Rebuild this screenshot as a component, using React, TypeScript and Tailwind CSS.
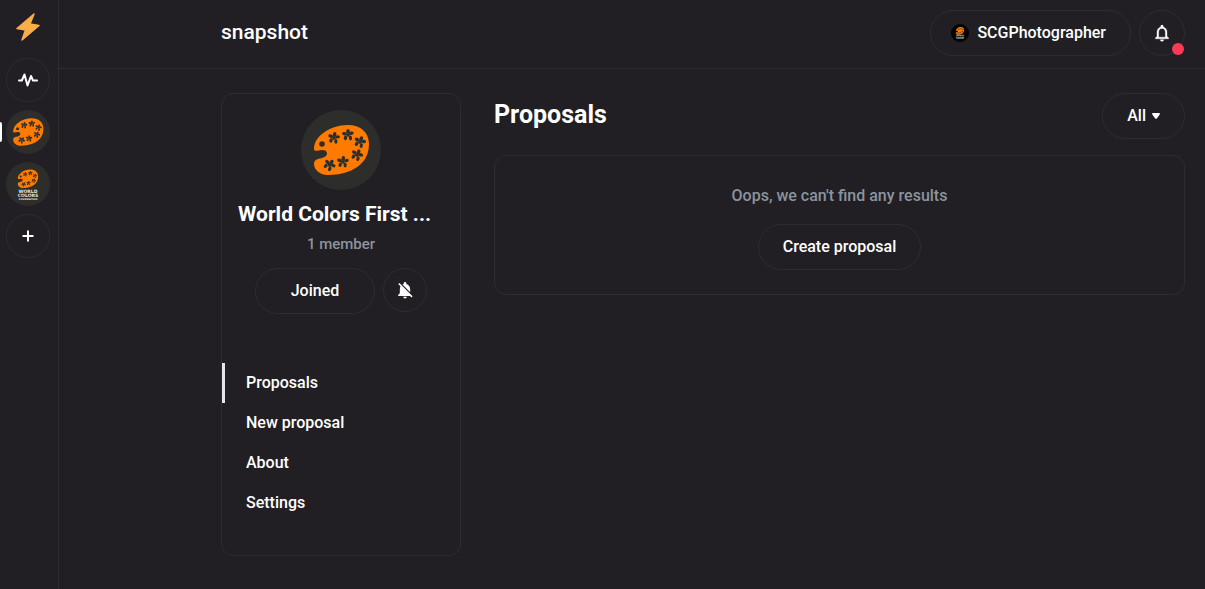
type IconProps = {
  className?: string;
};

const navItems = ["Proposals", "New proposal", "About", "Settings"];

const flowers = [
  { x: 33, y: 28, angle: 10 },
  { x: 47, y: 25, angle: 0 },
  { x: 59, y: 32, angle: 20 },
  { x: 56, y: 45, angle: 25 },
  { x: 42, y: 52, angle: 5 },
  { x: 28.5, y: 55, angle: 35 },
];

function Palette() {
  return (
    <>
      <path
        fill="#ff7a00"
        d="M13 39C13 33 16 28 21 24C28 18 38 15 47 15C59 15 68 22 68 34C68 48 60 56 49 61C41 64 33 65 27 65C19 65 13 60 13 54C13 50 16 49 19 48.500C23 48 26 46 26 43.500C26 41 24 40 21 40C17 40.500 13 42 13 39Z"
      />
      <g fill="#2d2e2c">
        <circle cx="21" cy="34" r="2.800" />
        {flowers.map((f) => (
          <g key={f.x} transform={`translate(${f.x} ${f.y}) rotate(${f.angle})`}>
            <circle r="1.800" />
            <ellipse cx="0" cy="-3.600" rx="1.800" ry="2.500" />
            <ellipse cx="3.600" cy="-1" rx="2.400" ry="1.700" transform="rotate(-12)" />
            <ellipse cx="2" cy="3.300" rx="1.600" ry="2.400" transform="rotate(-8)" />
            <ellipse cx="-2" cy="3.300" rx="1.700" ry="2.300" transform="rotate(10)" />
            <ellipse cx="-3.700" cy="-.8" rx="2.500" ry="1.700" transform="rotate(8)" />
          </g>
        ))}
      </g>
    </>
  );
}

function PaletteAvatar({ className }: IconProps) {
  return (
    <svg viewBox="0 0 80 80" className={className} aria-hidden="true">
      <circle cx="40" cy="40" r="40" fill="#2d2e2c" />
      <Palette />
    </svg>
  );
}

function WorldColorsAvatar({ className, background }: IconProps & { background: string }) {
  return (
    <svg viewBox="0 0 44 44" className={className} aria-hidden="true">
      <circle cx="22" cy="22" r="22" fill={background} />
      <g transform="translate(7 2) scale(.37)">
        <Palette />
      </g>
      <g fill="#e4e4e4" textAnchor="middle" fontFamily="DejaVu Sans, sans-serif" fontWeight="700">
        <text x="22" y="30.500" fontSize="4.500">WORLD</text>
        <text x="22" y="35" fontSize="4.500">COLORS</text>
        <text x="22" y="37.500" fontSize="2.500">FOUNDATION</text>
      </g>
    </svg>
  );
}

function Bell({ className }: IconProps) {
  return (
    <svg viewBox="0 0 24 24" fill="currentColor" stroke="currentColor" strokeWidth=".4" className={className} aria-hidden="true">
      <path d="M12 22c1.100 0 2-.9 2-2h-4c0 1.100.9 2 2 2zm6-6v-5c0-3.070-1.630-5.640-4.500-6.320V4c0-.83-.67-1.500-1.500-1.500s-1.500.67-1.500 1.500v.68C7.640 5.360 6 7.920 6 11v5l-2 2v1h16v-1l-2-2zm-2 1H8v-6c0-2.480 1.510-4.500 4-4.500s4 2.020 4 4.500v6z" />
    </svg>
  );
}

function BellOff({ className }: IconProps) {
  return (
    <svg viewBox="0 0 24 24" fill="currentColor" className={className} aria-hidden="true">
      <path d="M7 6.800C6.200 8 5.800 9.400 5.800 11V16L3.800 18V19.200H19Z" />
      <path d="M9 5.400Q9.700 4.900 10.400 4.700V4C10.400 3.100 11.100 2.400 12 2.400S13.600 3.100 13.600 4V4.700C16.500 5.400 18.200 8 18.200 11V14.800Z" />
      <path d="M9.900 20H14.100C14.100 21.200 13.100 22.100 12 22.100S9.900 21.200 9.900 20Z" />
      <path fill="none" stroke="currentColor" strokeWidth="1.900" d="M4.600 4.200L20.400 20.300" />
    </svg>
  );
}

function Sidebar() {
  return (
    <aside className="flex w-[59px] shrink-0 flex-col items-center gap-2 border-r border-[#2d2c31] pr-[2px]">
      <a href="#" aria-label="Home" className="flex h-[50px] items-center pt-1">
        <svg viewBox="0 0 24 28" className="h-7 w-6" aria-hidden="true">
          <path
            fill="#f9ae4a"
            stroke="#f9ae4a"
            strokeWidth="1.500"
            strokeLinejoin="round"
            d="M18 1L1 15.500L9.500 17L6 27L23 12.500L14 11Z"
          />
        </svg>
      </a>
      <button
        aria-label="Timeline"
        className="flex size-11 items-center justify-center rounded-full border border-[#2d2c31]"
      >
        <svg
          viewBox="0 0 20 16"
          className="h-4 w-5"
          fill="none"
          stroke="white"
          strokeWidth="2"
          strokeLinecap="round"
          strokeLinejoin="round"
          aria-hidden="true"
        >
          <path d="M1 8.500H3.800L6.500 2.500L9.500 13.500L13 4L15 8.500H19" />
        </svg>
      </button>
      <div className="relative flex w-full justify-center">
        <span className="absolute top-3 left-0 h-5 w-[2px] rounded-r bg-white" />
        <a href="#" aria-label="World Colors First">
          <PaletteAvatar className="size-11" />
        </a>
      </div>
      <a href="#" aria-label="World Colors">
        <WorldColorsAvatar className="size-11" background="#2d2e2c" />
      </a>
      <button
        aria-label="Create space"
        className="flex size-11 items-center justify-center rounded-full border border-[#2d2c31]"
      >
        <svg viewBox="0 0 12 12" className="size-3" stroke="white" strokeWidth="2" aria-hidden="true">
          <path d="M6 .5V11.500M.5 6H11.500" />
        </svg>
      </button>
    </aside>
  );
}

function Header() {
  return (
    <header className="flex h-[69px] items-center justify-between border-b border-[#2d2c31] pr-5 pb-[2px] pl-[162px]">
      <a href="#" className="text-[21px] font-medium">
        snapshot
      </a>
      <div className="flex gap-2">
        <button className="flex h-[46px] items-center gap-2 rounded-full border border-[#2d2c31] pr-6 pl-5">
          <WorldColorsAvatar className="size-[18px]" background="#000000" />
          <span>SCGPhotographer</span>
        </button>
        <button
          aria-label="Notifications"
          className="relative flex size-[46px] items-center justify-center rounded-full border border-[#2d2c31]"
        >
          <Bell className="size-5" />
          <span className="absolute right-0 bottom-0 size-3 rounded-full bg-[#ff3856]" />
        </button>
      </div>
    </header>
  );
}

function SpaceCard() {
  return (
    <section className="w-60 shrink-0 rounded-xl border border-[#2d2c31] pb-8">
      <div className="flex flex-col items-center px-4 pt-4">
        <PaletteAvatar className="size-20" />
        <h3 className="mt-2 w-full text-[21px] leading-8 font-bold whitespace-nowrap">
          World Colors First ...
        </h3>
        <p className="mt-[2px] text-[15px] leading-6 text-[#8b949e]">1 member</p>
        <div className="mt-3 flex gap-2">
          <button className="h-[46px] w-[120px] rounded-full border border-[#2d2c31]">Joined</button>
          <button
            aria-label="Mute notifications"
            className="flex size-11 items-center justify-center rounded-full border border-[#2d2c31]"
          >
            <BellOff className="size-5" />
          </button>
        </div>
      </div>
      <nav className="mt-[49px] flex flex-col">
        {navItems.map((item, index) => (
          <a
            key={item}
            href="#"
            className={
              index === 0
                ? "flex h-10 items-center border-l-[3px] border-[#e6e6ea] pl-[21px]"
                : "flex h-10 items-center pl-6"
            }
          >
            {item}
          </a>
        ))}
      </nav>
    </section>
  );
}

export default function App() {
  return (
    <div className="flex min-h-screen bg-[#211f24] font-['Roboto',sans-serif] text-base font-medium text-white">
      <Sidebar />
      <div className="min-w-0 flex-1">
        <Header />
        <div className="flex items-start gap-[33px] pt-6 pr-5 pl-[162px]">
          <SpaceCard />
          <main className="min-w-0 flex-1">
            <div className="flex items-start justify-between">
              <h2 className="text-[25px] leading-[44px] font-bold">Proposals</h2>
              <button className="flex h-[46px] items-center gap-[6px] rounded-full border border-[#2d2c31] px-6">
                All
                <svg viewBox="0 0 8 6" className="h-[6px] w-2" fill="white" aria-hidden="true">
                  <path d="M1 0H7Q8.500.3 7.500 1.800L4.800 5.400Q4 6.200 3.200 5.400L.5 1.800Q-.5.3 1 0Z" />
                </svg>
              </button>
            </div>
            <div className="mt-4 flex flex-col items-center rounded-xl border border-[#2d2c31] pt-7 pb-6">
              <p className="leading-6 text-[#8b949e]">Oops, we can't find any results</p>
              <button className="mt-4 h-[46px] rounded-full border border-[#2d2c31] px-6">
                Create proposal
              </button>
            </div>
          </main>
        </div>
      </div>
    </div>
  );
}
